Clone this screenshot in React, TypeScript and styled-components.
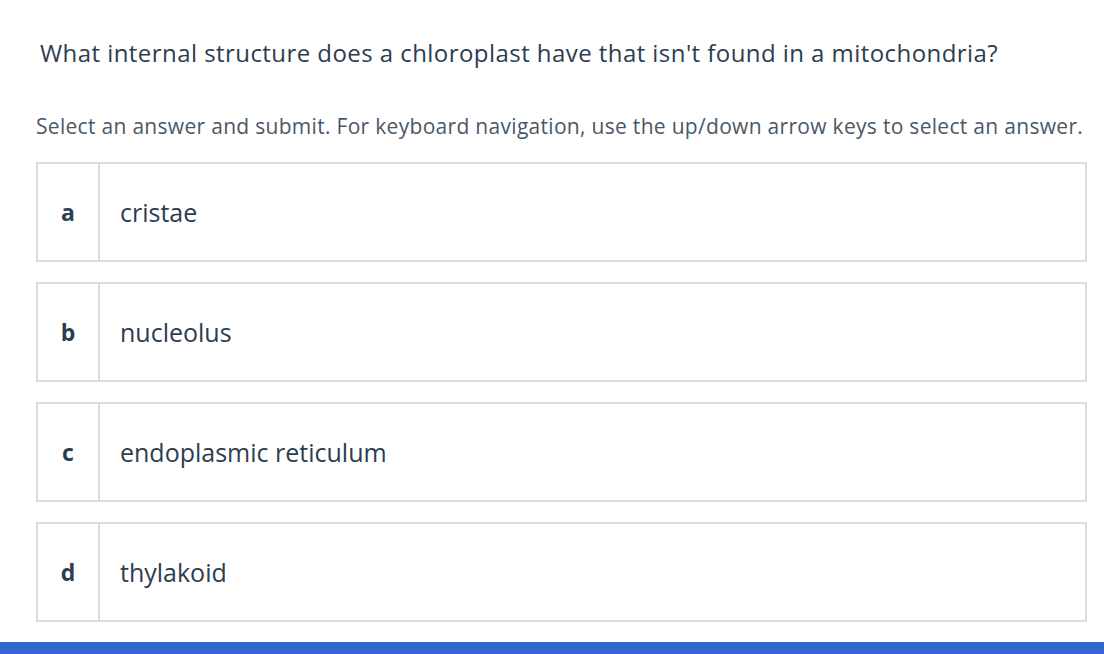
import React from "react";
import styled, { createGlobalStyle } from "styled-components";

const GlobalStyle = createGlobalStyle`
  html, body {
    margin: 0;
    padding: 0;
    background: #ffffff;
    font-family: "Open Sans", Lato, sans-serif;
  }
`;

const answers = [
  { key: "a", text: "cristae" },
  { key: "b", text: "nucleolus" },
  { key: "c", text: "endoplasmic reticulum" },
  { key: "d", text: "thylakoid" },
];

export default function App() {
  return (
    <>
      <GlobalStyle />
      <Page>
        <Content>
          <Question>What internal structure does a chloroplast have that isn't found in a mitochondria?</Question>
          <Instructions>
            Select an answer and submit. For keyboard navigation, use the up/down arrow keys to select an answer.
          </Instructions>
          <AnswerList role="radiogroup">
            {answers.map((a) => (
              <AnswerRow key={a.key} role="radio" aria-checked={false}>
                <Letter>{a.key}</Letter>
                <AnswerText>{a.text}</AnswerText>
              </AnswerRow>
            ))}
          </AnswerList>
        </Content>
        <BottomBar />
      </Page>
    </>
  );
}

const Page = styled.div`
  width: 1104px;
  height: 654px;
  display: flex;
  flex-direction: column;
  overflow: hidden;
`;

const Content = styled.div`
  flex: 1;
  display: flex;
  flex-direction: column;
  padding: 37px 17px 0 36px;
`;

const Question = styled.h1`
  margin: 0 0 0 4px;
  font-size: 24px;
  letter-spacing: 0.44px;
  line-height: 32px;
  font-weight: 400;
  color: #2c3d50;
  white-space: nowrap;
`;

const Instructions = styled.p`
  margin: 44px 0 0 0;
  font-size: 21px;
  letter-spacing: 0.3px;
  line-height: 26px;
  font-weight: 400;
  color: #4a5867;
  white-space: nowrap;
`;

const AnswerList = styled.div`
  margin-top: 23px;
  display: flex;
  flex-direction: column;
  gap: 20px;
`;

const AnswerRow = styled.div`
  height: 100px;
  box-sizing: border-box;
  border: 2px solid #d9dde2;
  display: flex;
  align-items: stretch;
  cursor: pointer;
`;

const Letter = styled.div`
  width: 60px;
  border-right: 2px solid #d9dde2;
  display: flex;
  align-items: center;
  justify-content: center;
  font-size: 23px;
  font-weight: 700;
  color: #2c3d50;
`;

const AnswerText = styled.div`
  flex: 1;
  display: flex;
  align-items: center;
  padding-left: 20px;
  font-size: 25px;
  color: #2c3d50;
`;

const BottomBar = styled.div`
  height: 12px;
  background: #3366cf;
`;
